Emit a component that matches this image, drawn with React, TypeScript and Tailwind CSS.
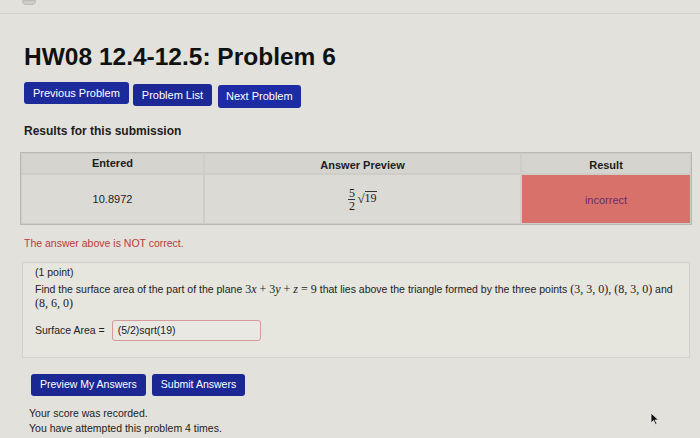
export default function App() {
  const font = { fontFamily: '"Liberation Sans", Arial, sans-serif' };
  const serif = { fontFamily: '"Liberation Serif", "Times New Roman", serif' };
  return (
    <div className="w-[700px] h-[438px] overflow-hidden bg-[#e3e1db] text-[#1c1c1c] relative" style={font}>
      {/* top strip from the page above */}
      <div className="h-[14px] border-b border-[#d2d0ca] flex items-start pl-[22px]">
        <div className="w-[14px] h-[5px] rounded-b-sm bg-[#cfcdc7] border border-[#bdbbb5]" />
      </div>

      <div className="pl-[24px] pr-[8px]">
        <h1 className="mt-[28px] text-[24.5px] leading-[30px] font-bold text-[#111]">HW08 12.4-12.5: Problem 6</h1>

        <div className="mt-[10px] flex items-start">
          <button className="h-[22px] px-[9px] rounded-[3px] bg-[#1d2a9c] text-white text-[11px]">Previous Problem</button>
          <button className="ml-[4px] mt-[2px] h-[22px] px-[9px] rounded-[3px] bg-[#1b2896] text-white text-[11px]">Problem List</button>
          <button className="ml-[6px] mt-[3px] h-[23px] px-[8px] rounded-[3px] bg-[#1d2ca4] text-white text-[11px]">Next Problem</button>
        </div>

        <div className="mt-[14px] text-[12px] leading-[18px] font-bold">Results for this submission</div>
      </div>

      <div className="ml-[20px] mr-[8px] mt-[12px] border border-[#b9b7b1] bg-[#cfcdc8] p-[1px]">
        <div className="grid grid-cols-[181px_315px_1fr] gap-[2px] text-[11px]">
          <div className="h-[19px] bg-[#d6d4cf] flex items-center justify-center font-bold">Entered</div>
          <div className="h-[19px] bg-[#d6d4cf] flex items-end justify-center font-bold">Answer Preview</div>
          <div className="h-[19px] bg-[#d6d4cf] flex items-end justify-center font-bold">Result</div>
          <div className="h-[48px] bg-[#dcdad5] flex items-center justify-center">10.8972</div>
          <div className="h-[48px] bg-[#dcdad5] flex items-center justify-center">
            <span className="flex items-center" style={serif}>
              <span className="flex flex-col items-center text-[12px] leading-[12px] mr-[2px]">
                <span>5</span>
                <span className="w-[7px] border-t border-[#333]" />
                <span>2</span>
              </span>
              <span className="text-[13px]">√</span>
              <span className="text-[12px] border-t border-[#333] leading-[12px] mt-[-4px]">19</span>
            </span>
          </div>
          <div className="h-[48px] bg-[#d9716b] flex items-center justify-center text-[#6a2e6a] pt-[3px]">incorrect</div>
        </div>
      </div>

      <div className="pl-[24px] mt-[11px] text-[10.5px] leading-[14px] text-[#b83a3a]">The answer above is NOT correct.</div>

      <div className="ml-[22px] mr-[10px] mt-[12px] border border-[#d2d1ca] bg-[#e6e5de] pl-[12px] pt-[2px] pb-[16px] text-[10.5px] leading-[15px] text-[#222]">
        <div className="mb-[2px]">(1 point)</div>
        <div className="leading-[14px]">
          Find the surface area of the part of the plane{" "}
          <span className="text-[12px]" style={serif}>3<i>x</i> + 3<i>y</i> + <i>z</i> = 9</span>{" "}
          that lies above the triangle formed by the three points{" "}
          <span className="text-[12px]" style={serif}>(3, 3, 0), (8, 3, 0)</span> and
        </div>
        <div className="text-[12px] leading-[14px]" style={serif}>(8, 6, 0)</div>
        <div className="mt-[10px] flex items-center gap-[7px]">
          <span>Surface Area =</span>
          <div className="w-[149px] h-[21px] rounded-[3px] border border-[#d59a9a] bg-[#e9e8e2] flex items-center pl-[5px] text-[10.5px]">(5/2)sqrt(19)</div>
        </div>
      </div>

      <div className="pl-[31px] mt-[16px] flex gap-[6px]">
        <button className="h-[22px] px-[9px] rounded-[3px] bg-[#1b2894] text-white text-[10.5px]">Preview My Answers</button>
        <button className="h-[22px] px-[9px] rounded-[3px] bg-[#1b2894] text-white text-[10.5px]">Submit Answers</button>
      </div>

      <div className="pl-[29px] mt-[10px] text-[10.5px] leading-[15px] text-[#222]">
        <div>Your score was recorded.</div>
        <div>You have attempted this problem 4 times.</div>
      </div>

      {/* mouse cursor */}
      <svg className="absolute left-[650px] top-[412px]" width="9" height="13" viewBox="0 0 9 13">
        <path d="M1 1 L1 11 L3.5 8.5 L5.5 12.5 L7 11.8 L5 8 L8.5 8 Z" fill="#111" stroke="#eee" strokeWidth="0.8" />
      </svg>
    </div>
  );
}
